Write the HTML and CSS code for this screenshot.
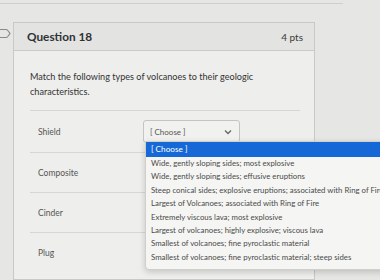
FILE: index.html
```html
<!DOCTYPE html>
<html lang="en">
<head>
    <meta charset="UTF-8">
    <title>Question 18</title>
    <link rel="stylesheet" href="styles.css">
</head>
<body>
    <div class="top-rule"></div>
    <div class="quiz">
        <svg class="flag" width="11" height="11" viewBox="0 0 11 11" fill="none">
            <path d="M0 1.5 H6 Q7 1.5 7.8 2.5 L10 5.5 L7.8 8.5 Q7 9.5 6 9.5 H0" stroke="#8a8a8a" stroke-width="1.2"/>
        </svg>
        <div class="question">
            <div class="q-header">
                <h2>Question 18</h2>
                <span class="pts">4 pts</span>
            </div>
            <div class="q-body">
                <p class="prompt">Match the following types of volcanoes to their geologic characteristics.</p>
                <div class="match-row">
                    <span class="term">Shield</span>
                    <div class="picker">
                        <div class="select">
                            <span>[ Choose ]</span>
                            <svg width="8" height="6" viewBox="0 0 8 6" fill="none">
                                <path d="M1 1.5 L4 4.5 L7 1.5" stroke="#666" stroke-width="1.3"/>
                            </svg>
                        </div>
                        <ul class="options">
                            <li class="active">[ Choose ]</li>
                            <li>Wide, gently sloping sides; most explosive</li>
                            <li>Wide, gently sloping sides; effusive eruptions</li>
                            <li>Steep conical sides; explosive eruptions; associated with Ring of Fire</li>
                            <li>Largest of Volcanoes; associated with Ring of Fire</li>
                            <li>Extremely viscous lava; most explosive</li>
                            <li>Largest of volcanoes; highly explosive; viscous lava</li>
                            <li>Smallest of volcanoes; fine pyroclastic material</li>
                            <li>Smallest of volcanoes; fine pyroclastic material; steep sides</li>
                        </ul>
                    </div>
                </div>
                <div class="match-row">
                    <span class="term">Composite</span>
                </div>
                <div class="match-row">
                    <span class="term">Cinder</span>
                </div>
                <div class="match-row">
                    <span class="term">Plug</span>
                </div>
            </div>
        </div>
    </div>
</body>
</html>
```

FILE: styles.css
```css
/* page */
body {
    margin: 0;
    height: 280px;
    overflow: hidden;
    font-family: Lato, "Open Sans", sans-serif;
    background-color: #e6e6e4;
    color: #3a3a3a;
}

.top-rule {
    margin-top: 3px;
    width: 343px;
    height: 1px;
    background-color: #cfcfcc;
}

.quiz {
    display: flex;
    align-items: flex-start;
    margin-top: 18px;
}

.flag {
    margin: 6px 2px 0 0;
    flex-shrink: 0;
}

/* question card */
.question {
    width: 300px;
    border: 1px solid #c9c9c6;
    background-color: #eeeeec;
}

.q-header {
    display: flex;
    align-items: center;
    justify-content: space-between;
    height: 27px;
    padding: 0 11px 0 13px;
    background-color: #e3e3e1;
    border-bottom: 1px solid #cbcbc8;
}
.q-header h2 {
    margin: 0;
    font-size: 11.8px;
    font-weight: 700;
    color: #2e3238;
}
.pts {
    font-size: 10px;
    color: #3a3a3a;
}

.q-body {
    box-sizing: border-box;
    height: 228px;
    padding: 18px 14px 0 16px;
}

.prompt {
    margin: 0 0 11px 0;
    width: 262px;
    font-size: 9.1px;
    line-height: 15px;
    color: #333;
}

/* match rows */
.match-row {
    display: flex;
    align-items: center;
    height: 39px;
    border-top: 1px solid #d6d6d3;
}
.match-row:first-of-type {
    height: 41px;
}
.term {
    width: 105px;
    padding-left: 8px;
    font-size: 8.5px;
    color: #555;
}

.picker {
    position: relative;
}
.select {
    display: flex;
    align-items: center;
    justify-content: space-between;
    box-sizing: border-box;
    width: 97px;
    height: 23px;
    padding: 0 7px 0 6px;
    border: 1px solid #c4c4c1;
    border-radius: 3px;
    background-color: #f1f1ef;
    font-size: 8px;
    color: #555;
}

/* open dropdown list */
.options {
    position: absolute;
    top: 21px;
    left: 2px;
    width: 240px;
    margin: 0;
    padding: 0 0 5px 0;
    list-style: none;
    background-color: #f5f5f3;
    border: 1px solid #cfcfcc;
    border-radius: 0 0 4px 4px;
    box-shadow: 0 2px 6px rgba(0, 0, 0, 0.18);
    z-index: 2;
}
.options li {
    height: 13.4px;
    padding-left: 5px;
    font-size: 7.8px;
    line-height: 13.4px;
    color: #4a4a4a;
    white-space: nowrap;
}
.options li.active {
    height: 15px;
    line-height: 15px;
    background-color: #1668d6;
    color: #fff;
    font-size: 8.2px;
}
```
